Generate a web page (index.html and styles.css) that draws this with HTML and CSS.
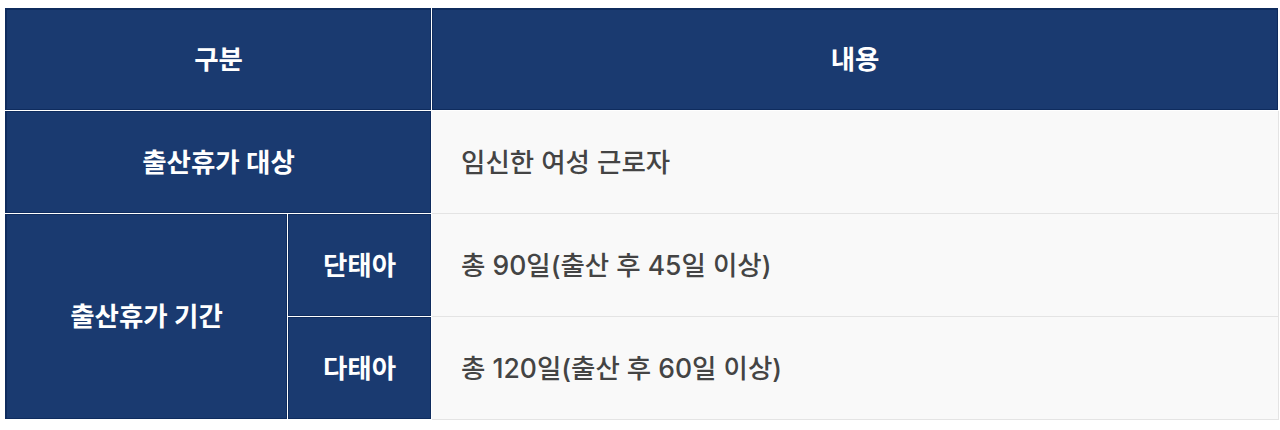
FILE: index.html
```html
<!DOCTYPE html>
<html lang="ko">
<head>
<meta charset="utf-8">
<link rel="stylesheet" href="styles.css">
</head>
<body>
<table class="leave">
  <colgroup>
    <col class="c-a">
    <col class="c-b">
    <col class="c-c">
  </colgroup>
  <thead>
    <tr class="head-row">
      <th colspan="2">구분</th>
      <th>내용</th>
    </tr>
  </thead>
  <tbody>
    <tr>
      <th colspan="2">출산휴가 대상</th>
      <td>임신한 여성 근로자</td>
    </tr>
    <tr>
      <th rowspan="2">출산휴가 기간</th>
      <th>단태아</th>
      <td>총 90일(출산 후 45일 이상)</td>
    </tr>
    <tr>
      <th>다태아</th>
      <td>총 120일(출산 후 60일 이상)</td>
    </tr>
  </tbody>
</table>
</body>
</html>
```
FILE: styles.css
```css
html, body {
  margin: 0;
  padding: 0;
  background: #ffffff;
}
body {
  padding: 8px 3px 0 5px;
  font-family: Inter, "Noto Sans CJK KR", "Noto Sans", sans-serif;
}
.leave {
  width: 1273px;
  border-collapse: collapse;
  table-layout: fixed;
}
.c-a { width: 282px; }
.c-b { width: 144px; }
.c-c { width: 847px; }
.leave th,
.leave td {
  height: 103px;
  padding: 0;
  box-sizing: border-box;
  font-size: 26.5px;
  line-height: 1.3;
  vertical-align: middle;
}
.leave .head-row th {
  height: 102px;
}
.leave th {
  background: #1a3a70;
  color: #ffffff;
  font-weight: 700;
  text-align: center;
  border: 1px solid #ffffff;
  box-shadow: inset 0 0 0 1px #0f2c5e;
}
.leave thead th {
  border-top-color: #0f2c5e;
}
.leave tr > th:first-child {
  border-left-color: #0f2c5e;
}
.leave td {
  background: #f9f9f9;
  color: #444444;
  font-weight: 500;
  text-align: left;
  padding-left: 29px;
  border: 1px solid #e4e4e4;
}
```
